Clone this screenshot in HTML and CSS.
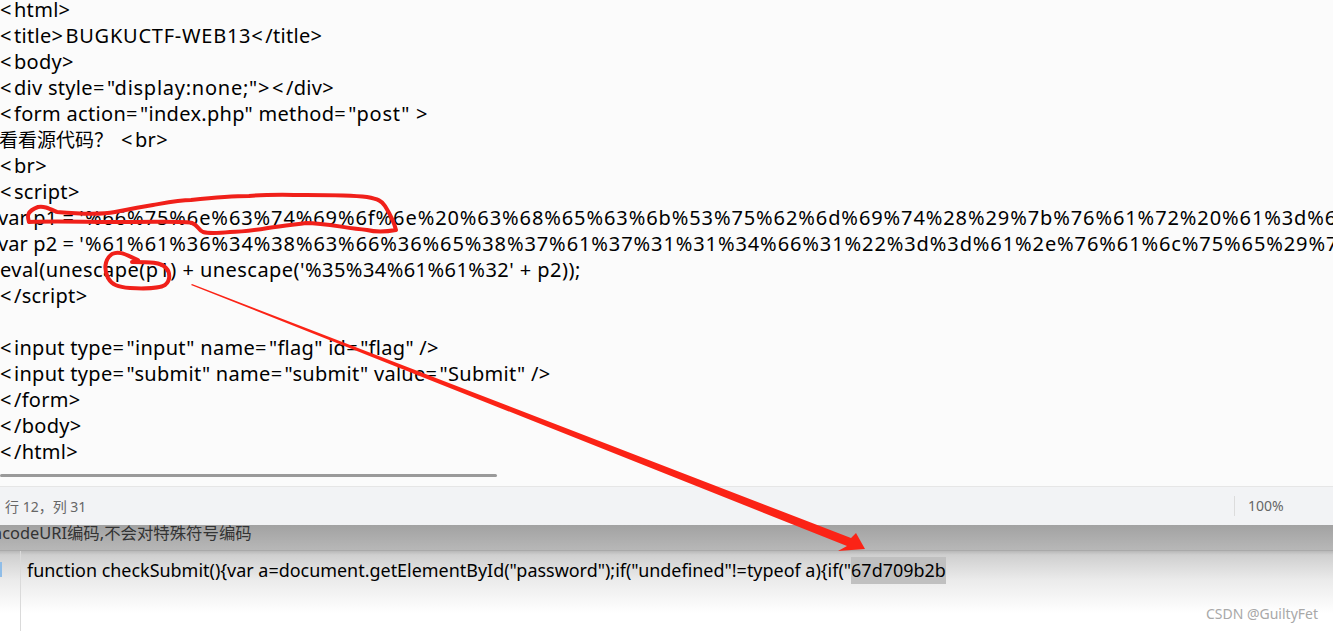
FILE: index.html
```html
<!DOCTYPE html>
<html lang="zh">
<head>
<meta charset="utf-8">
<title>BUGKUCTF-WEB13</title>
<link rel="stylesheet" href="styles.css">
</head>
<body>
<main class="shot">
  <section class="notepad">
    <div class="editor">
      <pre class="code"><span class="g">&lt;</span>html<span class="g">&gt;</span>
<span class="g">&lt;</span>title<span class="g">&gt;</span><span class="w">BUGKUCTF-WEB13</span><span class="g">&lt;</span>/title<span class="g">&gt;</span>
<span class="g">&lt;</span>body<span class="g">&gt;</span>
<span class="g">&lt;</span>div style<span class="g">=</span><span class="w">"display:none;"</span><span class="g">&gt;</span><span class="g">&lt;</span>/div<span class="g">&gt;</span>
<span class="g">&lt;</span>form action<span class="g">=</span>"index.php" method<span class="g">=</span><span class="w">"post" </span><span class="g">&gt;</span>
<span class="cjk">看看源代码？</span><span class="g">&lt;</span>br<span class="g">&gt;</span>
<span class="g">&lt;</span>br<span class="g">&gt;</span>
<span class="g">&lt;</span>script<span class="g">&gt;</span>
<span class="lead">var p1 = '</span><span class="hex">%66%75%6e%63%74%69%6f%6e%20%63%68%65%63%6b%53%75%62%6d%69%74%28%29%7b%76%61%72%20%61%3d%64%6f%63%75%6d%65%6e%74';</span>
<span class="lead">var p2 = '</span><span class="hex">%61%61%36%34%38%63%66%36%65%38%37%61%37%31%31%34%66%31%22%3d%3d%61%2e%76%61%6c%75%65%29%7b%72%65%74%75%72%6e%21';</span>
<span class="ev">eval(unescape(p1) + unescape('%35%34%61%61%32' + p2));</span>
<span class="g">&lt;</span>/script<span class="g">&gt;</span>

<span class="g">&lt;</span>input type<span class="g">=</span>"input" name<span class="g">=</span>"flag" id<span class="g">=</span>"flag" /<span class="g">&gt;</span>
<span class="g">&lt;</span>input type<span class="g">=</span>"submit" name<span class="g">=</span>"submit" value<span class="g">=</span>"Submit" /<span class="g">&gt;</span>
<span class="g">&lt;</span>/form<span class="g">&gt;</span>
<span class="g">&lt;</span>/body<span class="g">&gt;</span>
<span class="g">&lt;</span>/html<span class="g">&gt;</span></pre>
      <div class="scrollbar"></div>
    </div>
    <footer class="status">
      <span class="pos">行 12，列 31</span>
      <span class="zoom">100%</span>
    </footer>
  </section>
  <section class="console">
    <div class="tab">ncodeURI编码,不会对特殊符号编码</div>
    <div class="output">
      <div class="gutter"><span class="marker"></span></div>
      <div class="line">function checkSubmit(){var a=document.getElementById("password");if("undefined"!=typeof a){if("<span class="sel">67d709b2b</span></div>
    </div>
  </section>
  <div class="mark">CSDN @GuiltyFet</div>
  <svg class="ink" width="1333" height="631" viewBox="0 0 1333 631" aria-hidden="true">
    <path class="scribble" d="M29 222C27 216 27 211 38 207C44 206 48 208 57 212C80 214 100 215 115 212C130 209 140 207 153 205C170 202 180 200 191 200C210 198 230 196 249 196C270 194 290 195 306 195C330 195 350 195 367 197C378 199 382 201 385 206C390 214 394 222 396 230C385 232 375 232 367 230C345 228 325 223 306 223C290 225 280 226 268 228C250 231 240 232 230 232C220 233 210 234 203 232C198 230 198 225 192 223C186 221 170 222 115 222C85 222 55 221 29 222"/>
    <path class="scribble" d="M138 260C128 256 120 250 112 254C104 260 104 270 108 278C112 285 118 287 130 288C145 289 160 288 165 285C171 280 170 272 166 268C161 262 150 262 132 262"/>
    <polygon class="arrow" points="191,285 192,284 851,538 856,533 865,549 838,551 847,546"/>
  </svg>
</main>
</body>
</html>
```
FILE: styles.css
```css
html, body { margin: 0; padding: 0; }
body { width: 1333px; height: 631px; overflow: hidden; background: #fff; }
.shot { position: relative; width: 1333px; height: 631px; overflow: hidden; font-family: "Noto Sans", "Noto Sans CJK SC", sans-serif; }
.notepad { height: 525px; display: flex; flex-direction: column; background: #fbfbfb; }
.editor { position: relative; height: 486px; overflow: hidden; flex: none; }
.code { margin: -3px 0 0; font: 20px/26px "Noto Sans", "Noto Sans CJK SC", sans-serif; letter-spacing: .3px; color: #000; white-space: pre; }
.g { letter-spacing: 2.5px; }
.w { letter-spacing: .75px; }
.ev { letter-spacing: .45px; }
.cjk { font-size: 19px; letter-spacing: 0; margin-left: -1px; margin-right: 8px; }
.lead { letter-spacing: .1px; margin-left: -2px; margin-right: 1px; }
.hex { letter-spacing: .9px; }
.scrollbar { position: absolute; left: 0; top: 474px; width: 497px; height: 3px; border-radius: 2px; background: #9a9a9a; }
.status { height: 38px; flex: none; border-top: 1px solid #e6e6e6; background: #f2f3f5; color: #666; font-size: 14px; display: flex; align-items: center; justify-content: space-between; }
.pos { margin-left: 5px; }
.zoom { width: 99px; height: 20px; line-height: 20px; padding-left: 13px; box-sizing: border-box; border-left: 1px solid #dcdcdc; }
.console { height: 106px; background: linear-gradient(#a2a2a2 0, #b8b8b8 26px, #cfcfcf 30px, #ebebeb 55px, #fff 88px); }
.tab { height: 26px; line-height: 15px; margin-left: -8px; font-size: 16.4px; color: #333; border-bottom: 1px solid #a9a9a9; box-sizing: border-box; white-space: nowrap; }
.output { display: flex; height: 80px; }
.gutter { width: 20px; border-right: 1px solid #dadada; flex: none; position: relative; }
.marker { position: absolute; left: 0; top: 11px; width: 2px; height: 15px; background: #8fbde8; }
.line { margin-left: 6px; padding-top: 6px; font-size: 17.95px; line-height: 27px; color: #000; white-space: nowrap; height: 27px; }
.sel { display: inline-block; background: #c0c0c0; }
.mark { position: absolute; right: 15px; top: 606px; font-size: 14px; line-height: 16px; color: #a8a8a8; }
.ink { position: absolute; left: 0; top: 0; pointer-events: none; }
.scribble { fill: none; stroke: #f0201a; stroke-width: 4; stroke-linecap: round; stroke-linejoin: round; }
.arrow { fill: #fb2316; }
```
